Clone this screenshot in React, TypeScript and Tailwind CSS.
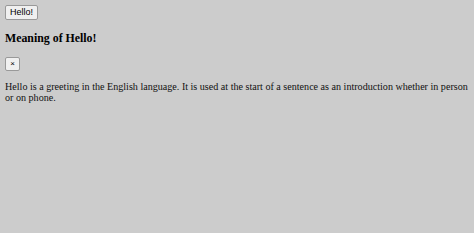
const App = () => {
  return (
    <div className="min-h-[233px] bg-[#cccccc] p-[5px] font-['Liberation_Serif',serif] text-black">
      <button className="block h-[15px] rounded-[2px] border border-[#999999] bg-[#f0f0f0] px-[4px] font-['Liberation_Sans',Arial,sans-serif] text-[9px] leading-[13px] text-black">
        Hello!
      </button>
      <h3 className="my-[11.5px] text-[11.85px] font-bold leading-[13.5px]">
        Meaning of Hello!
      </h3>
      <button className="block h-[14px] w-[15px] rounded-[2px] border border-[#999999] bg-[#f0f0f0] font-['Liberation_Sans',Arial,sans-serif] text-[8px] leading-[12px] text-black">
        ×
      </button>
      <p className="my-[10px] text-[10.1px] leading-[11.6px] text-[#111111]">
        Hello is a greeting in the English language. It is used at the start of
        a sentence as an introduction whether in person or on phone.
      </p>
    </div>
  );
};

export default App;
